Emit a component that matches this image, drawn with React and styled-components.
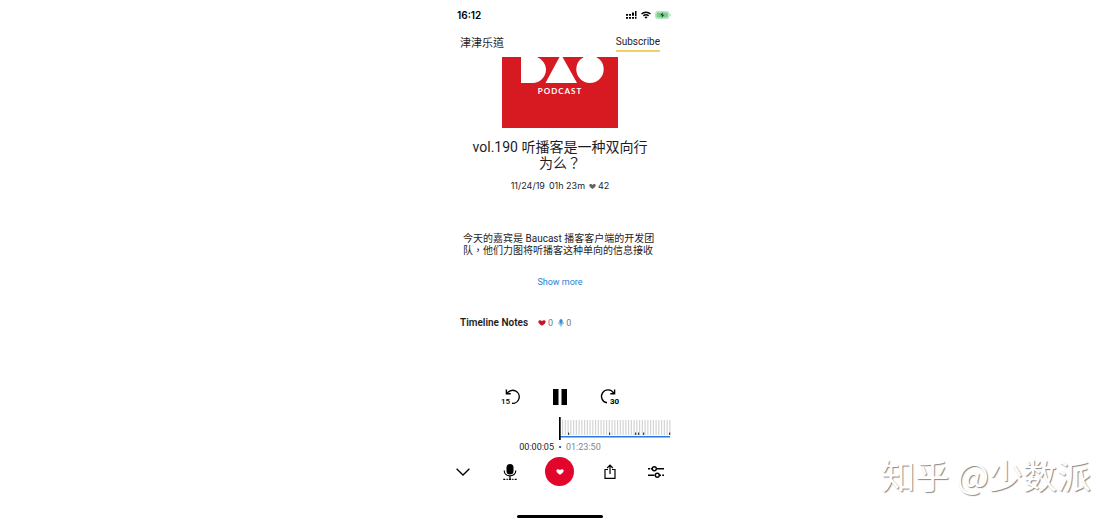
import React, { Component } from 'react';
import styled, { createGlobalStyle } from 'styled-components';

const GlobalStyle = createGlobalStyle`
  * {
    box-sizing: border-box;
  }
  body {
    margin: 0;
    background: #fff;
    color: #1d1d1f;
    font-family: Roboto, 'Noto Sans CJK TC', sans-serif;
  }
`;

const PageWrapper = styled.div`
  position: relative;
  min-height: 100vh;
  display: flex;
  justify-content: center;
  overflow: hidden;
`;

const Player = styled.main`
  width: 100%;
  max-width: 222px;
  display: flex;
  flex-direction: column;
`;

const StatusBar = styled.div`
  height: 30px;
  padding: 0 0 0 8px;
  display: flex;
  align-items: center;
  justify-content: space-between;
  font-family: Inter, sans-serif;
  font-size: 10px;
  font-weight: 600;
  color: #000;
`;

const StatusIcons = styled.div`
  display: flex;
  align-items: center;
  gap: 4px;
`;

const Header = styled.header`
  height: 27px;
  padding: 0 11px;
  display: flex;
  align-items: center;
  justify-content: space-between;
`;

const ShowName = styled.span`
  font-size: 11px;
  line-height: 18px;
`;

const SubscribeButton = styled.button`
  margin-bottom: 2px;
  border: 0;
  border-bottom: 2px solid #f0d264;
  padding: 0;
  background: none;
  font: inherit;
  font-size: 10px;
  line-height: 16px;
  color: inherit;
`;

const Cover = styled.div`
  width: 116px;
  height: 71px;
  margin: 0 auto;
  background: #d71a21;
  color: #fff;
  text-align: center;
`;

const CoverLabel = styled.div`
  padding-top: 2px;
  font-family: Lato, sans-serif;
  font-size: 8px;
  line-height: 12px;
  font-weight: 700;
  letter-spacing: 1px;
`;

const Title = styled.h1`
  margin: 11px 20px 0;
  font-size: 14px;
  line-height: 16px;
  font-weight: 400;
  text-align: center;
`;

const Meta = styled.div`
  margin-top: 9px;
  display: flex;
  align-items: center;
  justify-content: center;
  gap: 4px;
  font-family: Inter, sans-serif;
  font-size: 9px;
  line-height: 12px;
`;

const Count = styled.span`
  display: flex;
  align-items: center;
  gap: 2px;
  color: ${props => props.color || 'inherit'};
`;

const Description = styled.p`
  margin: 41px 0 0;
  padding: 0 14px;
  font-size: 10px;
  line-height: 12px;
  white-space: nowrap;
`;

const ShowMore = styled.a`
  margin: 19px auto 0;
  font-size: 9px;
  line-height: 12px;
  color: #1f7fd6;
  text-decoration: none;
`;

const Notes = styled.section`
  margin-top: 28px;
  padding: 0 11px;
  display: flex;
  align-items: center;
  gap: 5px;
  font-size: 9px;
  line-height: 14px;
`;

const NotesTitle = styled.h2`
  margin: 0 5px 0 0;
  font-size: 10px;
  font-weight: 600;
`;

const Controls = styled.div`
  margin-top: 55px;
  display: flex;
  align-items: center;
  justify-content: center;
  gap: 28px;
`;

const IconButton = styled.button`
  width: 22px;
  height: 24px;
  padding: 0;
  border: 0;
  background: none;
  color: #000;
  display: flex;
  align-items: center;
  justify-content: center;
`;

const Waveform = styled.div`
  margin: 8px 1px 0 50%;
  height: 24px;
`;

const Times = styled.div`
  display: grid;
  grid-template-columns: 1fr 12px 1fr;
  font-size: 9px;
  line-height: 12px;
  text-align: center;
`;

const Elapsed = styled.span`
  text-align: right;
`;

const Duration = styled.span`
  text-align: left;
  color: #85858a;
`;

const Toolbar = styled.nav`
  margin-top: 4px;
  padding: 0 4px 0 3px;
  display: flex;
  align-items: center;
  justify-content: space-between;
`;

const LikeButton = styled.button`
  width: 29px;
  height: 29px;
  padding: 0;
  border: 0;
  border-radius: 50%;
  background: #e2062c;
  color: #fff;
  display: flex;
  align-items: center;
  justify-content: center;
`;

const HomeIndicator = styled.div`
  width: 86px;
  height: 3px;
  margin: 29px auto 5px;
  border-radius: 2px;
  background: #000;
`;

const Watermark = styled.div`
  position: absolute;
  right: 29px;
  bottom: 26px;
  font-family: 'Noto Sans CJK SC', sans-serif;
  font-size: 34px;
  line-height: 44px;
  color: #fff;
  text-shadow: 1px 1px 1px #888;
`;

const Heart = ({ size = 7, color = 'currentColor' }) => (
  <svg width={size} height={size} viewBox="0 0 14 14" fill={color} aria-hidden="true">
    <path d="M7 12C4.500 10 .6 7.600.6 4.800.6 3 2 2 3.700 2 5.100 2 6.300 2.600 7 3.800 7.700 2.600 8.900 2 10.300 2 12 2 13.400 3 13.400 4.800 13.400 7.600 9.500 10 7 12Z" />
  </svg>
);

const SmallMic = () => (
  <svg width="6" height="8" viewBox="0 0 12 16" fill="none" stroke="#3b8ed0" strokeWidth="1.500" aria-hidden="true">
    <rect x="3.500" y="1" width="5" height="8" rx="2.500" fill="#3b8ed0" />
    <path d="M1 7c0 6 10 6 10 0M6 12v3.500" />
  </svg>
);

const Signal = () => (
  <svg width="11" height="8" viewBox="0 0 11 8" fill="#000" aria-hidden="true">
    <path d="M0 3h2v1.800H0zM3 3h2v1.800H3zM6 1.500h2v3.300H6zM9 0h1.500v5.300H9zM0 6h2v1.700H0zM3 6h2v1.700H3zM6 6h2v1.700H6zM9 6h1.500v1.700H9z" />
  </svg>
);

const Wifi = () => (
  <svg width="10" height="8" viewBox="0 0 20 15" fill="none" stroke="#000" strokeWidth="3" aria-hidden="true">
    <path d="M1 5.500c5-5 13-5 18 0M4.800 9.300c3-3 7.400-3 10.400 0" />
    <path d="M10 15 7 11.800c1.800-1.600 4.200-1.600 6 0z" fill="#000" stroke="none" />
  </svg>
);

const Battery = () => (
  <svg width="16" height="8" viewBox="0 0 16 8" aria-hidden="true">
    <rect x=".4" y=".4" width="13.600" height="7.200" rx="2.200" fill="#c9f0d2" stroke="#a9dab5" strokeWidth=".7" />
    <rect x="1.600" y="1.600" width="11.200" height="4.800" rx="1.200" fill="#6bd486" />
    <path d="M14.700 2.700v2.600c1.300-.4 1.300-2.200 0-2.600z" fill="#8fcf9f" />
    <path d="M8.300.6 4.600 4.500h2.300L6.200 7.400 9.900 3.500H7.600z" fill="#0b2412" stroke="#c9f0d2" strokeWidth=".4" />
  </svg>
);

const CoverShapes = () => (
  <svg width="116" height="26" viewBox="0 0 116 26" fill="#fff" style={{ display: 'block' }} aria-hidden="true">
    <path d="M19 0h16c5 2 9 7 9 12.500C44 20 38 26 30.500 26H19zM57.500 0h3L75 26H43.500z" />
    <circle cx="88" cy="12.300" r="13.700" />
  </svg>
);

const Skip = ({ seconds, forward }) => (
  <svg width="22" height="20" viewBox="0 0 22 20" overflow="visible" aria-hidden="true">
    <g fill="none" stroke="#000" strokeWidth="1.400">
      {forward ? (
        <path d="M8 15.800A6.500 6.500 0 1 1 14.700 6.200M15.600 2.500v4.300h-4.300" />
      ) : (
        <path d="M13 16.300A6.500 6.500 0 1 0 8.300 6.200M7.400 2.500v4.300h4.300" />
      )}
    </g>
    <text
      x={forward ? 11 : 2}
      y="17"
      fontFamily="Roboto, sans-serif"
      fontSize="8"
      fontWeight={forward ? 700 : 500}
    >
      {seconds}
    </text>
  </svg>
);

const bars = Array.from({ length: 40 }, (_, i) => 3 + i * 2.75);
const markers = [9, 50, 76, 79, 84, 110];

class App extends Component {
  state = {
    liked: true
  };

  toggleLike = () => {
    this.setState({ liked: !this.state.liked });
  };

  render() {
    return (
      <PageWrapper>
        <GlobalStyle />
        <Player>
          <StatusBar>
            <span>16:12</span>
            <StatusIcons>
              <Signal />
              <Wifi />
              <Battery />
            </StatusIcons>
          </StatusBar>

          <Header>
            <ShowName>津津乐道</ShowName>
            <SubscribeButton>Subscribe</SubscribeButton>
          </Header>

          <Cover>
            <CoverShapes />
            <CoverLabel>PODCAST</CoverLabel>
          </Cover>

          <Title>vol.190 听播客是一种双向行为么？</Title>
          <Meta>
            <span>11/24/19</span>
            <span>01h 23m</span>
            <Count>
              <Heart color="#636366" />
              42
            </Count>
          </Meta>

          <Description>
            今天的嘉宾是 Baucast 播客客户端的开发团
            <br />
            队，他们力图将听播客这种单向的信息接收
          </Description>
          <ShowMore href="#more">Show more</ShowMore>

          <Notes>
            <NotesTitle>Timeline Notes</NotesTitle>
            <Count color="#77777c">
              <Heart size={8} color="#c8142b" />
              0
            </Count>
            <Count color="#77777c">
              <SmallMic />
              0
            </Count>
          </Notes>

          <Controls>
            <IconButton aria-label="Back 15 seconds">
              <Skip seconds={15} />
            </IconButton>
            <IconButton aria-label="Pause">
              <svg width="16" height="16" viewBox="0 0 16 16">
                <path d="M1 0h5.500v16H1zM9.500 0H15v16H9.500z" />
              </svg>
            </IconButton>
            <IconButton aria-label="Forward 30 seconds">
              <Skip seconds={30} forward />
            </IconButton>
          </Controls>

          <Waveform>
            <svg width="100%" height="24" viewBox="1 0 110 24" preserveAspectRatio="none" overflow="visible" aria-hidden="true">
              {bars.map(x => (
                <rect key={x} x={x} y="3" width="1.200" height="15" fill="#d4d4d4" />
              ))}
              {markers.map(x => (
                <rect key={x} x={x} y="15.500" width="1.200" height="2.500" fill="#444" />
              ))}
              <rect x="0" y="19" width="111" height="1.500" fill="#2a78e4" />
              <rect x="0" y="0" width="1.700" height="23" fill="#000" />
            </svg>
          </Waveform>
          <Times>
            <Elapsed>00:00:05</Elapsed>
            <span>•</span>
            <Duration>01:23:50</Duration>
          </Times>

          <Toolbar>
            <IconButton aria-label="Close player">
              <svg width="14" height="8" viewBox="0 0 14 8" fill="none" stroke="#000" strokeWidth="1.300">
                <path d="M.6.8 7 7 13.400.8" />
              </svg>
            </IconButton>
            <IconButton aria-label="Record a note">
              <svg width="16" height="18" viewBox="0 0 16 18" fill="none" stroke="#000" strokeWidth="1.200">
                <rect x="4.500" y="1" width="7" height="10.500" rx="3.500" fill="#000" stroke="none" />
                <path d="M2.200 7.500c0 7.200 11.600 7.200 11.600 0M8 13v3" />
                <path d="M1.300 16.400h2M4.500 16.400h1.300M6.800 16.400h2.400M10.200 16.400h1.300M12.700 16.400h2" />
              </svg>
            </IconButton>
            <LikeButton aria-label="Like" aria-pressed={this.state.liked} onClick={this.toggleLike}>
              <Heart size={8} />
            </LikeButton>
            <IconButton aria-label="Share">
              <svg width="12" height="15" viewBox="0 0 12 15" fill="none" stroke="#000" strokeWidth="1.200">
                <path d="M4 5.500H1v8.800h10V5.500H8M6 10V1.200M3.200 4 6 1.200 8.800 4" />
              </svg>
            </IconButton>
            <IconButton aria-label="Playback settings">
              <svg width="18" height="14" viewBox="0 0 18 14" fill="none" stroke="#000" strokeWidth="1.400">
                <path d="M1 3.800h2.200M4 3.800h1M9.800 3.800H17M1 10.200h6.500M12.800 10.200H14M15.200 10.200H17" />
                <circle cx="7.300" cy="3.800" r="2" />
                <circle cx="10.300" cy="10.200" r="2" />
              </svg>
            </IconButton>
          </Toolbar>
          <HomeIndicator />
        </Player>
        <Watermark>知乎 @少数派</Watermark>
      </PageWrapper>
    );
  }
}

export default App;
